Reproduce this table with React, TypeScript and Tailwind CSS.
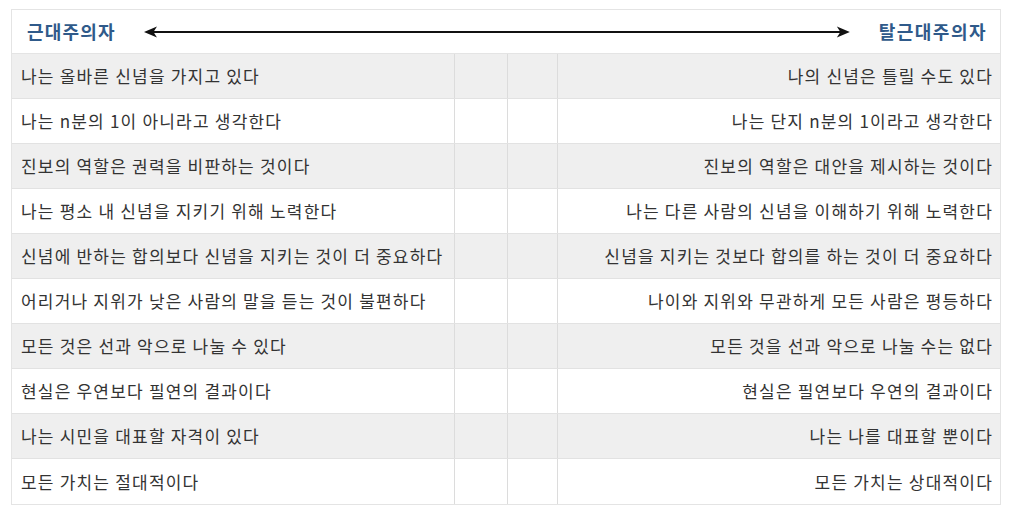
const rows: [string, string][] = [
  ["나는 올바른 신념을 가지고 있다", "나의 신념은 틀릴 수도 있다"],
  ["나는 n분의 1이 아니라고 생각한다", "나는 단지 n분의 1이라고 생각한다"],
  ["진보의 역할은 권력을 비판하는 것이다", "진보의 역할은 대안을 제시하는 것이다"],
  ["나는 평소 내 신념을 지키기 위해 노력한다", "나는 다른 사람의 신념을 이해하기 위해 노력한다"],
  ["신념에 반하는 합의보다 신념을 지키는 것이 더 중요하다", "신념을 지키는 것보다 합의를 하는 것이 더 중요하다"],
  ["어리거나 지위가 낮은 사람의 말을 듣는 것이 불편하다", "나이와 지위와 무관하게 모든 사람은 평등하다"],
  ["모든 것은 선과 악으로 나눌 수 있다", "모든 것을 선과 악으로 나눌 수는 없다"],
  ["현실은 우연보다 필연의 결과이다", "현실은 필연보다 우연의 결과이다"],
  ["나는 시민을 대표할 자격이 있다", "나는 나를 대표할 뿐이다"],
  ["모든 가치는 절대적이다", "모든 가치는 상대적이다"],
];

function Arrow() {
  return (
    <svg className="h-[14px] w-full" viewBox="0 0 708 14" preserveAspectRatio="none">
      <line x1="8" y1="7" x2="700" y2="7" stroke="#111" strokeWidth="2" />
      <path d="M0 7 L13 1.5 L9.5 7 L13 12.5 Z" fill="#111" />
      <path d="M708 7 L695 1.5 L698.5 7 L695 12.5 Z" fill="#111" />
    </svg>
  );
}

export default function App() {
  return (
    <div
      className="h-[512px] w-[1010px] bg-white pl-[11px] pt-[9px]"
      style={{ fontFamily: '"Noto Sans CJK KR", "Noto Sans", sans-serif' }}
    >
      <div className="w-[990px] border border-[#e4e4e4] text-[17px] tracking-[1.2px] text-[#333]">
        {/* header */}
        <div className="flex h-[44px] items-center border-b border-[#e4e4e4] pl-[15px] pr-[13px]">
          <span className="shrink-0 whitespace-nowrap text-[18px] font-bold tracking-[1.2px] text-[#2f5a8a]">
            근대주의자
          </span>
          <div className="ml-[28px] mr-[29px] flex min-w-0 flex-1 items-center">
            <Arrow />
          </div>
          <span className="shrink-0 whitespace-nowrap text-[18px] font-bold tracking-[1.5px] text-[#2f5a8a]">
            탈근대주의자
          </span>
        </div>

        {rows.map(([left, right], i) => (
          <div
            key={i}
            className={`flex h-[45px] ${i < rows.length - 1 ? "border-b border-[#e2e2e2]" : ""} ${
              i % 2 === 0 ? "bg-[#efefef]" : "bg-white"
            }`}
          >
            <div className="flex w-[443px] items-center whitespace-nowrap border-r border-[#dcdcdc] pl-[9px]">
              {left}
            </div>
            <div className="w-[53px] border-r border-[#dcdcdc]" />
            <div className="w-[50px] border-r border-[#dcdcdc]" />
            <div className="flex flex-1 items-center justify-end whitespace-nowrap pr-[7px]">
              {right}
            </div>
          </div>
        ))}
      </div>
    </div>
  );
}
